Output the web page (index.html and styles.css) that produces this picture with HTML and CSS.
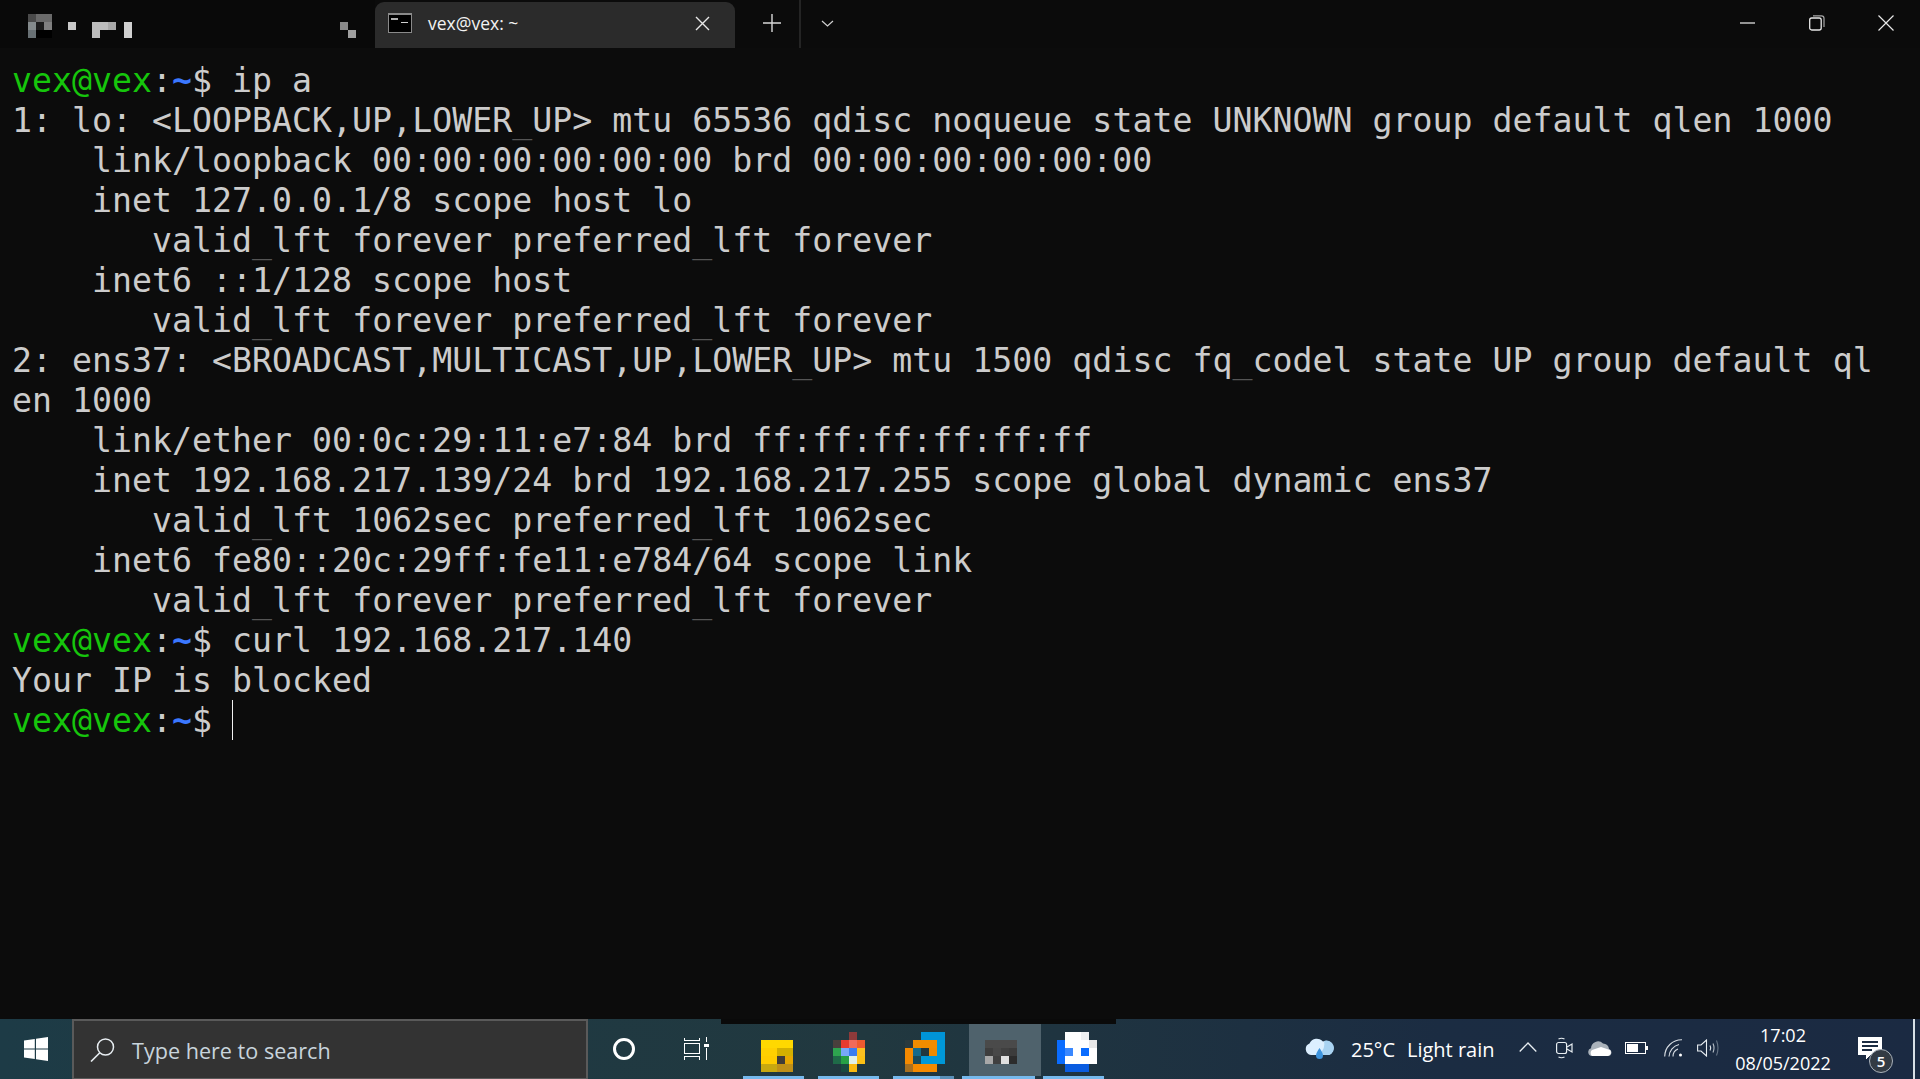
FILE: index.html
```html
<!DOCTYPE html>
<html lang="en">
<head>
<meta charset="utf-8">
<title>vex@vex: ~</title>
<link rel="stylesheet" href="styles.css">
</head>
<body>
<div class="window">
  <header class="titlebar">
    <svg class="tab-mosaic" width="375" height="48" viewBox="0 0 375 48" shape-rendering="crispEdges">
      <rect x="28" y="14" width="8" height="8" fill="#4a4a4a"/><rect x="36" y="14" width="16" height="8" fill="#6a6a6a"/>
      <rect x="28" y="22" width="8" height="8" fill="#848a8c"/><rect x="36" y="22" width="8" height="8" fill="#1c1c1c"/><rect x="44" y="22" width="8" height="8" fill="#808080"/>
      <rect x="28" y="30" width="8" height="8" fill="#687074"/><rect x="36" y="30" width="16" height="8" fill="#000"/>
      <rect x="68" y="22" width="8" height="8" fill="#c8c8c8"/>
      <rect x="92" y="22" width="16" height="8" fill="#bcbcbc"/><rect x="92" y="30" width="8" height="8" fill="#bcbcbc"/><rect x="108" y="22" width="8" height="8" fill="#a8a8a8"/>
      <rect x="124" y="22" width="8" height="16" fill="#d0d0d0"/>
      <rect x="340" y="22" width="8" height="8" fill="#8a8a8a"/><rect x="348" y="30" width="8" height="8" fill="#a0a0a0"/>
    </svg>
    <div class="tab">
      <svg class="tab-icon" width="24" height="20" viewBox="0 0 24 20" shape-rendering="crispEdges">
        <rect x="0" y="0" width="24" height="20" fill="#8a8a8a"/><rect x="1" y="2" width="22" height="17" fill="#000"/>
        <rect x="3" y="5" width="7" height="2" fill="#b0b0b0"/><rect x="13" y="9" width="7" height="1" fill="#d0d0d0"/>
      </svg>
      <span class="tab-title">vex@vex: ~</span>
      <svg class="tab-close" width="15" height="15" viewBox="0 0 15 15"><path d="M1 1L14 14M14 1L1 14" stroke="#e8e8e8" stroke-width="1.4" fill="none"/></svg>
    </div>
    <button class="new-tab"><svg width="18" height="18" viewBox="0 0 18 18"><path d="M9 0V18M0 9H18" stroke="#d8d8d8" stroke-width="1.4" fill="none"/></svg></button>
    <button class="tab-menu"><svg width="13" height="7" viewBox="0 0 13 7"><path d="M1 1L6.500 6L12 1" stroke="#d0d0d0" stroke-width="1.2" fill="none"/></svg></button>
    <div class="win-controls">
      <button class="win-btn"><svg width="16" height="16" viewBox="0 0 16 16"><path d="M0 8H15" stroke="#e0e0e0" stroke-width="1.300" fill="none"/></svg></button>
      <button class="win-btn"><svg width="16" height="16" viewBox="0 0 16 16"><rect x="0.700" y="3" width="11.500" height="12" rx="2" stroke="#e8e8e8" stroke-width="1.300" fill="none"/><path d="M4 0.800H12.500Q15 0.800 15 3.300V12" stroke="#a8a8a8" stroke-width="1.200" fill="none"/></svg></button>
      <button class="win-btn"><svg width="16" height="16" viewBox="0 0 16 16"><path d="M0.500 0.500L15.500 15.500M15.500 0.500L0.500 15.500" stroke="#e8e8e8" stroke-width="1.200" fill="none"/></svg></button>
    </div>
  </header>

  <main class="terminal">
<div class="line"><span class="green">vex@vex</span>:<span class="blue">~</span>$ ip a</div>
<div class="line">1: lo: &lt;LOOPBACK,UP,LOWER<span class="us">_</span>UP&gt; mtu 65536 qdisc noqueue state UNKNOWN group default qlen 1000</div>
<div class="line">    link/loopback 00:00:00:00:00:00 brd 00:00:00:00:00:00</div>
<div class="line">    inet 127.0.0.1/8 scope host lo</div>
<div class="line">       valid<span class="us">_</span>lft forever preferred<span class="us">_</span>lft forever</div>
<div class="line">    inet6 ::1/128 scope host</div>
<div class="line">       valid<span class="us">_</span>lft forever preferred<span class="us">_</span>lft forever</div>
<div class="line">2: ens37: &lt;BROADCAST,MULTICAST,UP,LOWER<span class="us">_</span>UP&gt; mtu 1500 qdisc fq<span class="us">_</span>codel state UP group default ql</div>
<div class="line">en 1000</div>
<div class="line">    link/ether 00:0c:29:11:e7:84 brd ff:ff:ff:ff:ff:ff</div>
<div class="line">    inet 192.168.217.139/24 brd 192.168.217.255 scope global dynamic ens37</div>
<div class="line">       valid<span class="us">_</span>lft 1062sec preferred<span class="us">_</span>lft 1062sec</div>
<div class="line">    inet6 fe80::20c:29ff:fe11:e784/64 scope link</div>
<div class="line">       valid<span class="us">_</span>lft forever preferred<span class="us">_</span>lft forever</div>
<div class="line"><span class="green">vex@vex</span>:<span class="blue">~</span>$ curl 192.168.217.140</div>
<div class="line">Your IP is blocked</div>
<div class="line"><span class="green">vex@vex</span>:<span class="blue">~</span>$ <span class="cursor"></span></div>
  </main>

  <footer class="taskbar">
    <button class="start">
      <svg width="24" height="24" viewBox="0 0 24 24"><path d="M0 3.400L10.800 1.900V11.400H0ZM12 1.700L24 0V11.400H12ZM0 12.600H10.800V22.100L0 20.600ZM12 12.600H24V24L12 22.300Z" fill="#fff"/></svg>
    </button>
    <div class="search">
      <svg width="25" height="24" viewBox="0 0 25 24"><circle cx="15.500" cy="9" r="8" stroke="#e8eef2" stroke-width="1.500" fill="none"/><path d="M9.800 14.800L1 23.500" stroke="#e8eef2" stroke-width="1.600" fill="none"/></svg>
      <span class="search-text">Type here to search</span>
    </div>
    <button class="cortana"><svg width="24" height="24" viewBox="0 0 24 24"><circle cx="12" cy="12" r="9.500" stroke="#fff" stroke-width="3" fill="none"/></svg></button>
    <button class="taskview">
      <svg width="25" height="24" viewBox="0 0 25 24" shape-rendering="crispEdges" fill="none" stroke="#fff" stroke-width="1">
        <path d="M0.500 4V0.500M15.500 4V0.500M0.500 3.500H15.500"/><rect x="0.500" y="6.500" width="15" height="9.500"/><path d="M0.500 23V19.500H15.500V23"/>
        <path d="M22.500 0V5M22.500 11V23"/><rect x="20" y="7" width="5" height="3" fill="#fff" stroke="none"/>
      </svg>
    </button>
    <div class="apps">
      <div class="tile">
        <div class="tile-body">
          <svg class="app-icon" width="40" height="40" viewBox="0 0 40 40" shape-rendering="crispEdges">
            <rect x="0" y="8" width="32" height="8" fill="#ffd800"/>
            <rect x="0" y="16" width="16" height="8" fill="#ffd000"/><rect x="16" y="16" width="16" height="8" fill="#d4b000"/>
            <rect x="0" y="24" width="16" height="8" fill="#ffcc00"/><rect x="16" y="24" width="8" height="8" fill="#403c38"/><rect x="24" y="24" width="8" height="8" fill="#e8a800"/>
            <rect x="0" y="32" width="16" height="8" fill="#c8a810"/><rect x="16" y="32" width="16" height="8" fill="#c09018"/>
          </svg>
        </div>
        <div class="underline u1"></div>
      </div>
      <div class="tile">
        <div class="tile-body">
          <svg class="app-icon" width="40" height="40" viewBox="0 0 40 40" shape-rendering="crispEdges">
            <rect x="16" y="0" width="8" height="8" fill="#8e3a3a"/>
            <rect x="0" y="8" width="8" height="8" fill="#4a3f3c"/><rect x="8" y="8" width="8" height="8" fill="#e83a30"/><rect x="16" y="8" width="8" height="8" fill="#f06a5a"/><rect x="24" y="8" width="8" height="8" fill="#ee5a30"/>
            <rect x="0" y="16" width="8" height="8" fill="#2ea44f"/><rect x="8" y="16" width="8" height="8" fill="#78a8f8"/><rect x="16" y="16" width="8" height="8" fill="#3a7cf0"/><rect x="24" y="16" width="8" height="8" fill="#fcc020"/>
            <rect x="0" y="24" width="8" height="8" fill="#1f6a48"/><rect x="8" y="24" width="8" height="8" fill="#27a045"/><rect x="16" y="24" width="8" height="8" fill="#e0f0e8"/><rect x="24" y="24" width="8" height="8" fill="#fcc015"/>
            <rect x="8" y="32" width="8" height="8" fill="#1a4a40"/><rect x="16" y="32" width="8" height="8" fill="#f8b810"/>
          </svg>
        </div>
        <div class="underline u2"></div>
      </div>
      <div class="tile tile-wide">
        <div class="tile-body">
          <svg class="app-icon" width="40" height="40" viewBox="0 0 40 40" shape-rendering="crispEdges">
            <rect x="16" y="0" width="24" height="8" fill="#0094d8"/>
            <rect x="0" y="8" width="8" height="8" fill="#2a3a3e"/><rect x="8" y="8" width="24" height="8" fill="#f08c00"/><rect x="32" y="8" width="8" height="8" fill="#0098d8"/>
            <rect x="0" y="16" width="8" height="8" fill="#f58a00"/><rect x="8" y="16" width="8" height="8" fill="#156a8c"/><rect x="24" y="16" width="8" height="8" fill="#ee8a00"/><rect x="32" y="16" width="8" height="8" fill="#0098d8"/>
            <rect x="0" y="24" width="8" height="8" fill="#f58a00"/><rect x="8" y="24" width="8" height="8" fill="#1a4a5a"/><rect x="16" y="24" width="24" height="8" fill="#0098d8"/>
            <rect x="0" y="32" width="8" height="8" fill="#a87020"/><rect x="8" y="32" width="24" height="8" fill="#f58a00"/>
          </svg>
        </div>
        <div class="underline u3"></div>
      </div>
      <div class="tile tile-active">
        <div class="tile-body">
          <svg class="app-icon icon-near" width="40" height="40" viewBox="0 0 40 40" shape-rendering="crispEdges">
            <rect x="0" y="8" width="32" height="8" fill="#4a4a4a"/>
            <rect x="0" y="16" width="8" height="8" fill="#3e3e3e"/><rect x="8" y="16" width="8" height="8" fill="#484848"/><rect x="16" y="16" width="8" height="8" fill="#404040"/><rect x="24" y="16" width="8" height="8" fill="#3c3c3c"/>
            <rect x="0" y="24" width="8" height="8" fill="#a8a8a8"/><rect x="8" y="24" width="8" height="8" fill="#404040"/><rect x="16" y="24" width="8" height="8" fill="#e0e0e0"/><rect x="24" y="24" width="8" height="8" fill="#2c2c2c"/>
          </svg>
        </div>
        <div class="underline u4"></div>
      </div>
      <div class="tile">
        <div class="tile-body">
          <svg class="app-icon icon-near" width="40" height="40" viewBox="0 0 40 40" shape-rendering="crispEdges">
            <rect x="8" y="0" width="16" height="8" fill="#fff"/><rect x="24" y="0" width="8" height="8" fill="#eef0f2"/>
            <rect x="0" y="8" width="8" height="24" fill="#0a6cff"/><rect x="8" y="8" width="24" height="8" fill="#fff"/><rect x="32" y="8" width="8" height="8" fill="#e8e8e8"/>
            <rect x="8" y="16" width="8" height="8" fill="#3a88ff"/><rect x="16" y="16" width="8" height="8" fill="#fff"/><rect x="24" y="16" width="8" height="8" fill="#0a6cff"/><rect x="32" y="16" width="8" height="8" fill="#fff"/>
            <rect x="8" y="24" width="32" height="8" fill="#fff"/>
            <rect x="8" y="32" width="24" height="8" fill="#0a5ce0"/>
          </svg>
        </div>
        <div class="underline u5"></div>
      </div>
    </div>
    <div class="tray">
      <svg class="weather" width="31" height="23" viewBox="0 0 31 23">
        <path d="M7 18A6 6 0 0 1 5.500 6.500A8 8 0 0 1 19 4.500A7 7 0 0 1 25 18Z" fill="#dcefff"/>
        <path d="M20 4A7 7 0 0 1 25 18H12Q22 14 20 4Z" fill="#a9d3f2"/>
        <path d="M15.500 11Q19 16 19 18.500A3.500 3.500 0 0 1 12 18.500Q12 16 15.500 11Z" fill="#3d93dc"/>
      </svg>
      <span class="temp">25°C</span>
      <span class="cond">Light rain</span>
      <svg class="t-chev" width="18" height="10" viewBox="0 0 18 10"><path d="M0.700 9.500L9 1L17.300 9.500" stroke="#e8eef2" stroke-width="1.300" fill="none"/></svg>
      <svg class="t-meet" width="17" height="22" viewBox="0 0 17 22" fill="none" stroke="#e8eef2" stroke-width="1.200">
        <rect x="0.600" y="5.500" width="10" height="11" rx="2"/><path d="M11 10L16 7V15L11 12"/><path d="M2.500 2Q5.500 0.500 8.500 2M2.500 20Q5.500 21.500 8.500 20"/>
      </svg>
      <svg class="t-cloud" width="24" height="16" viewBox="0 0 24 16">
        <path d="M4 16A4 4 0 0 1 3 8.200A7 7 0 0 1 15 3.500A6 6 0 0 1 21 9A3.600 3.600 0 0 1 20 16Z" fill="#aab2ba"/>
        <path d="M4 16A4 4 0 0 1 4 10L13 7L22 10A3.600 3.600 0 0 1 20 16Z" fill="#fff"/>
      </svg>
      <svg class="t-batt" width="23" height="12" viewBox="0 0 23 12" shape-rendering="crispEdges">
        <rect x="0.500" y="0.500" width="20" height="11" stroke="#fff" fill="none"/><rect x="2" y="2" width="11" height="8" fill="#fff"/><rect x="21" y="4" width="2" height="4" fill="#fff"/>
      </svg>
      <svg class="t-wifi" width="19" height="18" viewBox="0 0 19 18" fill="none" stroke="#d8dee4" stroke-width="1.100">
        <path d="M0.700 17.500A17 17 0 0 1 18 0.700"/><path d="M5 17.500A13 13 0 0 1 15 5.500"/><path d="M9 17.500A8 8 0 0 1 14 10"/><circle cx="16.500" cy="16" r="1.500" fill="#fff" stroke="none"/>
      </svg>
      <svg class="t-vol" width="22" height="18" viewBox="0 0 22 18" fill="none" stroke="#e8eef2" stroke-width="1.100">
        <path d="M0.600 6V12H4L9.500 17V1L4 6Z"/><path d="M13 6.500Q14.500 9 13 11.500"/><path d="M16 4.500Q18 9 16 13.500" stroke="#b8c0c8"/><path d="M19.500 1.500Q22.500 9 19.500 16.500" stroke="#667484"/>
      </svg>
      <div class="clock"><span>17:02</span><span>08/05/2022</span></div>
      <div class="notify">
        <svg width="24" height="24" viewBox="0 0 24 24" shape-rendering="crispEdges">
          <path d="M0 0H24V18H12L8 23V18H0Z" fill="#fff"/><path d="M4 5H20M4 9H20M4 13H14" stroke="#1c2c42" stroke-width="1.200"/>
        </svg>
        <span class="badge">5</span>
      </div>
      <div class="show-desktop"></div>
    </div>
  </footer>
</div>
</body>
</html>
```

FILE: styles.css
```css
* { box-sizing: border-box; }
html, body { margin: 0; padding: 0; height: 100%; background: #0c0c0c; overflow: hidden; }
button { border: 0; padding: 0; background: none; display: flex; align-items: center; justify-content: center; flex: none; }
svg { display: block; flex: none; }

.window { width: 1920px; height: 1079px; display: flex; flex-direction: column; }

.titlebar { height: 48px; flex: none; display: flex; align-items: stretch; background: #0b0b0b; }
.tab-mosaic { width: 375px; background: #090909; }
.tab { width: 360px; flex: none; margin-top: 2px; background: #2b2b2b; border-radius: 9px 9px 0 0; display: flex; align-items: center; padding: 0 25px 4px 13px; font-family: "Open Sans", "Noto Sans", sans-serif; }
.tab-title { margin-left: 16px; font-size: 17.5px; color: #f2f2f2; flex: 1; }
.new-tab { width: 66px; border-right: 2px solid #242424; padding: 0 0 2px 9px; }
.tab-menu { width: 52px; padding: 0 0 2px 0; }
.win-controls { margin-left: auto; display: flex; }
.win-btn { width: 69px; padding-bottom: 2px; }

.terminal { flex: 1; padding: 12px 0 0 12px; overflow: hidden; font-family: "DejaVu Sans Mono", "Liberation Mono", monospace; font-size: 33.2px; letter-spacing: 0.026px; color: #cccccc; }
.line { height: 40px; line-height: 42px; white-space: pre; }
.green { color: #16c60c; }
.blue { color: #3b78ff; font-weight: 700; }
.us { color: #555; }
.cursor { display: inline-block; width: 1px; height: 40px; background: #f2f2f2; vertical-align: top; }

.taskbar { height: 60px; flex: none; display: flex; align-items: stretch; background: linear-gradient(90deg, #1d3b46 0%, #21383f 45%, #1b2c42 75%, #1b2a42 100%); font-family: "Open Sans", "Noto Sans", sans-serif; color: #fff; }
.start { width: 72px; }
.search { width: 516px; flex: none; background: #333; border: 2px solid #5a5a5a; border-bottom-width: 1px; display: flex; align-items: center; padding-left: 16px; }
.search-text { margin-left: 17px; font-size: 21.6px; color: #c8d4dc; margin-top: 1px; }
.cortana { width: 72px; }
.taskview { width: 61px; justify-content: flex-start; padding-left: 24px; }
.apps { width: 395px; flex: none; border-top: 5px solid #0a0a0a; display: flex; padding-left: 20px; }
.tile { width: 72px; flex: none; display: flex; flex-direction: column; }
.tile-wide { width: 84px; }
.tile-body { flex: 1; padding: 8px 0 0 20px; }
.tile-active .tile-body { background: #4f626c; padding-left: 16px; }
.tile:last-child .tile-body { padding-left: 16px; }
.underline { height: 3px; width: 61px; flex: none; background: #76b9ed; }
.u1 { margin-left: 2px; }
.u2 { margin-left: 5px; }
.u3 { margin-left: 8px; background: linear-gradient(90deg, #76b9ed 0 47px, #5a90b8 47px); }
.u4 { margin-left: -7px; width: 73px; }
.u5 { margin-left: 2px; }

.tray { flex: 1; min-width: 0; display: flex; align-items: center; justify-content: flex-end; }
.tray > * { flex: none; }
.weather { margin-top: -2px; }
.temp { margin-left: 16px; width: 56px; font-size: 20px; white-space: nowrap; }
.cond { width: 86px; font-size: 20px; white-space: nowrap; }
.t-chev { margin-left: 26px; margin-top: -4px; }
.t-meet { margin-left: 19px; margin-top: -2px; }
.t-cloud { margin-left: 15px; margin-top: -2px; }
.t-batt { margin-left: 13px; margin-top: -2px; }
.t-wifi { margin-left: 16px; margin-top: -2px; }
.t-vol { margin-left: 14px; margin-top: -2px; }
.clock { width: 108px; margin-left: 10px; display: flex; flex-direction: column; align-items: center; gap: 4px; font-size: 18px; line-height: 24px; }
.notify { width: 24px; height: 38px; margin-left: 21px; position: relative; align-self: flex-start; margin-top: 18px; }
.badge { position: absolute; left: 11px; top: 12px; width: 24px; height: 24px; border-radius: 50%; background: #333b44; border: 1px solid #aab2ba; font-size: 15px; font-weight: 600; line-height: 22px; text-align: center; }
.show-desktop { width: 2px; align-self: stretch; background: #d8e0e6; margin-left: 31px; margin-right: 5px; }
```
